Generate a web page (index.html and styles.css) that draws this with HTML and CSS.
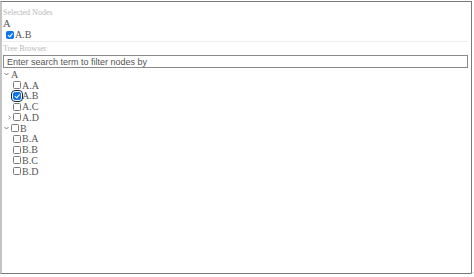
FILE: index.html
```html
<!DOCTYPE html>
<html>
<head>
<meta charset="utf-8">
<link rel="stylesheet" href="styles.css">
</head>
<body>
<div class="frame">
  <section class="selected">
    <div class="label">Selected Nodes</div>
    <div class="group-name">A</div>
    <div class="sel-item"><input type="checkbox" class="cb" checked><span>A.B</span></div>
  </section>
  <section class="browser">
    <div class="label">Tree Browser</div>
    <input class="search" type="text" placeholder="Enter search term to filter nodes by">
    <ul class="tree">
      <li class="row root">
        <svg class="chev" viewBox="0 0 6 4"><path d="M0.6 0.8 L3 3.2 L5.4 0.8" fill="none" stroke="#555" stroke-width="0.9"/></svg>
        <span>A</span>
      </li>
      <li class="row child"><span class="gutter"></span><input type="checkbox" class="cb"><span>A.A</span></li>
      <li class="row child"><span class="gutter"></span><input type="checkbox" class="cb focus" checked><span>A.B</span></li>
      <li class="row child"><span class="gutter"></span><input type="checkbox" class="cb"><span>A.C</span></li>
      <li class="row child"><span class="gutter"><svg class="chev-r" viewBox="0 0 4 6"><path d="M0.8 0.6 L3.2 3 L0.8 5.4" fill="none" stroke="#555" stroke-width="0.9"/></svg></span><input type="checkbox" class="cb"><span>A.D</span></li>
      <li class="row root">
        <svg class="chev" viewBox="0 0 6 4"><path d="M0.6 0.8 L3 3.2 L5.4 0.8" fill="none" stroke="#555" stroke-width="0.9"/></svg>
        <input type="checkbox" class="cb"><span>B</span>
      </li>
      <li class="row child"><span class="gutter"></span><input type="checkbox" class="cb"><span>B.A</span></li>
      <li class="row child"><span class="gutter"></span><input type="checkbox" class="cb"><span>B.B</span></li>
      <li class="row child"><span class="gutter"></span><input type="checkbox" class="cb"><span>B.C</span></li>
      <li class="row child"><span class="gutter"></span><input type="checkbox" class="cb"><span>B.D</span></li>
    </ul>
  </section>
  <svg class="grip" viewBox="0 0 7 7"><path d="M6.5 1 L1 6.5 M6.5 4 L4 6.5" stroke="#c4c4c4" stroke-width="0.8"/></svg>
</div>
</body>
</html>
```
FILE: styles.css
```css
html, body {
  margin: 0;
  padding: 0;
  background: #fff;
}
body {
  font-family: "Liberation Serif", "Times New Roman", serif;
  color: #444;
}
.frame {
  position: relative;
  box-sizing: border-box;
  width: 472px;
  height: 273px;
  margin-top: 1px;
  border: 1px solid #7a7a7a;
  border-left-width: 2px;
  border-left-color: #c4c4c4;
  padding: 0 3px 0 1px;
}
.label {
  font-size: 8px;
  color: #b8b8b8;
  height: 10px;
  line-height: 10px;
  margin-top: 6px;
}
.group-name {
  font-size: 10.5px;
  height: 11px;
  line-height: 11px;
  color: #555;
}
.sel-item {
  display: flex;
  align-items: center;
  height: 11px;
  font-size: 10px;
  color: #555;
  padding-left: 3px;
  padding-bottom: 1px;
  border-bottom: 1px solid #ededed;
}
.browser .label {
  margin-top: 2px;
}
.cb {
  -webkit-appearance: none;
  appearance: none;
  position: relative;
  box-sizing: border-box;
  width: 8px;
  height: 8px;
  margin: 0 1px 0 0;
  border: 1px solid #7a7a7a;
  border-radius: 1.5px;
  background: #fff;
  flex: none;
}
.cb:checked {
  background: #0a75f0;
  border-color: #0a75f0;
}
.cb:checked::after {
  content: "";
  position: absolute;
  left: 1.9px;
  top: 0.2px;
  width: 1.6px;
  height: 3.6px;
  border: solid #fff;
  border-width: 0 1.1px 1.1px 0;
  transform: rotate(40deg);
}
.cb.focus {
  outline: 1.5px solid #14294a;
  outline-offset: 1px;
  border-radius: 2px;
}
.search {
  display: block;
  box-sizing: border-box;
  width: 100%;
  height: 13px;
  margin: 1px 0 1px;
  padding: 0 3px;
  border: 1px solid #8a8a8a;
  border-radius: 0;
  font-family: "Liberation Sans", Arial, sans-serif;
  font-size: 9px;
  color: #333;
}
.search::placeholder {
  color: #555;
}
.tree {
  list-style: none;
  margin: 0;
  padding: 0;
}
.row {
  display: flex;
  align-items: center;
  height: 10.75px;
  font-size: 10px;
  line-height: 11px;
  color: #555;
}
.row.root {
  padding-left: 1px;
}
.chev {
  width: 5px;
  height: 4px;
  margin-right: 2px;
  flex: none;
}
.child {
  padding-left: 2px;
}
.gutter {
  display: inline-flex;
  align-items: center;
  justify-content: flex-end;
  width: 7px;
  margin-right: 1px;
  flex: none;
}
.chev-r {
  width: 3px;
  height: 5px;
  margin-right: 1px;
}
.grip {
  position: absolute;
  right: -3px;
  bottom: -5px;
  width: 7px;
  height: 7px;
}
```
